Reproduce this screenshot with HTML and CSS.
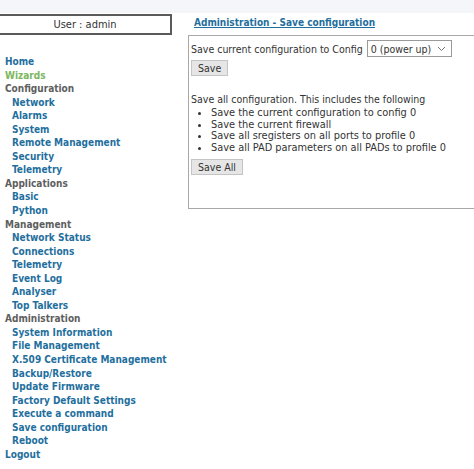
FILE: index.html
```html
<!DOCTYPE html>
<html>
<head>
<meta charset="utf-8">
<link rel="stylesheet" href="styles.css">
</head>
<body>
<div class="topbar"></div>
<div class="layout">
  <div class="sidebar">
    <div class="userbox">User : admin</div>
    <ul class="nav">
      <li class="top"><a href="#">Home</a></li>
      <li class="top wiz"><a href="#">Wizards</a></li>
      <li class="sec">Configuration</li>
      <li class="sub"><a href="#">Network</a></li>
      <li class="sub"><a href="#">Alarms</a></li>
      <li class="sub"><a href="#">System</a></li>
      <li class="sub"><a href="#">Remote Management</a></li>
      <li class="sub"><a href="#">Security</a></li>
      <li class="sub"><a href="#">Telemetry</a></li>
      <li class="sec">Applications</li>
      <li class="sub"><a href="#">Basic</a></li>
      <li class="sub"><a href="#">Python</a></li>
      <li class="sec">Management</li>
      <li class="sub"><a href="#">Network Status</a></li>
      <li class="sub"><a href="#">Connections</a></li>
      <li class="sub"><a href="#">Telemetry</a></li>
      <li class="sub"><a href="#">Event Log</a></li>
      <li class="sub"><a href="#">Analyser</a></li>
      <li class="sub"><a href="#">Top Talkers</a></li>
      <li class="sec">Administration</li>
      <li class="sub"><a href="#">System Information</a></li>
      <li class="sub"><a href="#">File Management</a></li>
      <li class="sub"><a href="#">X.509 Certificate Management</a></li>
      <li class="sub"><a href="#">Backup/Restore</a></li>
      <li class="sub"><a href="#">Update Firmware</a></li>
      <li class="sub"><a href="#">Factory Default Settings</a></li>
      <li class="sub"><a href="#">Execute a command</a></li>
      <li class="sub"><a href="#">Save configuration</a></li>
      <li class="sub"><a href="#">Reboot</a></li>
      <li class="top"><a href="#">Logout</a></li>
    </ul>
  </div>
  <div class="main">
    <div class="title"><a href="#">Administration - Save configuration</a></div>
    <div class="panel">
      <div class="row">
        <span>Save current configuration to Config</span>
        <span class="select">0 (power up)<svg class="chev" width="9" height="6" viewBox="0 0 9 6"><path d="M1 1 L4.5 4.5 L8 1" fill="none" stroke="#777" stroke-width="1"/></svg></span>
      </div>
      <div class="btnrow"><button class="btn">Save</button></div>
      <p class="desc">Save all configuration. This includes the following</p>
      <ul class="items">
        <li>Save the current configuration to config 0</li>
        <li>Save the current firewall</li>
        <li>Save all sregisters on all ports to profile 0</li>
        <li>Save all PAD parameters on all PADs to profile 0</li>
      </ul>
      <div class="btnrow"><button class="btn">Save All</button></div>
    </div>
  </div>
</div>
</body>
</html>
```
FILE: styles.css
```css
* { box-sizing: border-box; }
html, body { margin: 0; padding: 0; background: #fff; }
body {
  font-family: "DejaVu Sans Condensed", "DejaVu Sans", sans-serif;
  font-size: 10.5px;
  color: #333;
  width: 474px;
  height: 469px;
  overflow: hidden;
}
.topbar { height: 13px; background: #f4f6fa; }
.layout { display: flex; margin-top: 1px; }
.sidebar { width: 188px; flex: none; }
.userbox {
  width: 174px;
  height: 21px;
  margin-left: -2px;
  border: 2px solid #5a5a5a;
  text-align: center;
  line-height: 18px;
  font-size: 11px;
  color: #333;
}
.nav { list-style: none; margin: 20px 0 0 0; padding: 0; }
.nav li { height: 13.55px; line-height: 13.55px; font-weight: bold; font-size: 10px; white-space: nowrap; }
.nav a { text-decoration: none; color: #1f6f9e; }
.nav .top { padding-left: 5px; }
.nav .wiz a { color: #7cb65e; }
.nav .sec { padding-left: 5px; color: #5e5e5e; }
.nav .sub { padding-left: 12px; }
.main { flex: 1; min-width: 0; }
.title { padding: 2px 0 0 6px; height: 21px; line-height: 14px; font-size: 10px; }
.title a { color: #1f6f9e; font-weight: bold; text-decoration: underline; }
.panel {
  border: 1px solid #a8a8a8;
  border-right: none;
  height: 174px;
  padding: 4px 0 0 2px;
}
.row { display: flex; align-items: center; gap: 4px; height: 17px; }
.select {
  display: inline-flex;
  align-items: center;
  gap: 6px;
  height: 17px;
  padding: 0 5px 0 3px;
  border: 1px solid #9a9a9a;
  background: #fff;
}
.btnrow { margin-top: 3px; height: 16px; }
.btn {
  font: inherit;
  color: #333;
  background: #e6e6e6;
  border: 1px solid #c4c4c4;
  border-radius: 0;
  height: 16px;
  padding: 0 6px;
  line-height: 14px;
}
.desc { margin: 17px 0 0 0; line-height: 13px; }
.items { margin: 1px 0 0 0; padding-left: 20px; line-height: 11.7px; font-size: 10.9px; }
.items + .btnrow { margin-top: 5px; }
```
